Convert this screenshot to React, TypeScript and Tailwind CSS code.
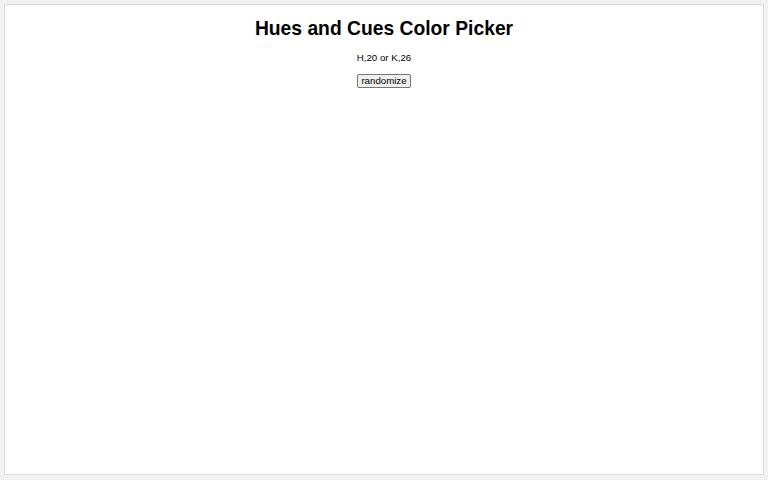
export default function App() {
  return (
    <div className="h-screen bg-[#f2f2f2] p-[4px] font-['Liberation_Sans',Arial,sans-serif] text-black">
      <div className="flex h-[471px] flex-col items-center border border-[#dcdcdc] bg-white">
        <h1 className="mt-[12px] text-[19.3px] font-bold leading-[24px]">Hues and Cues Color Picker</h1>
        <p className="mt-[11px] text-[9.7px] leading-[12px]">H,20 or K,26</p>
        <button className="mt-[10px] rounded-[2px] border border-[#767676] bg-[#efefef] px-[3px] text-[9.7px] leading-[12px]">
          randomize
        </button>
      </div>
    </div>
  );
}
